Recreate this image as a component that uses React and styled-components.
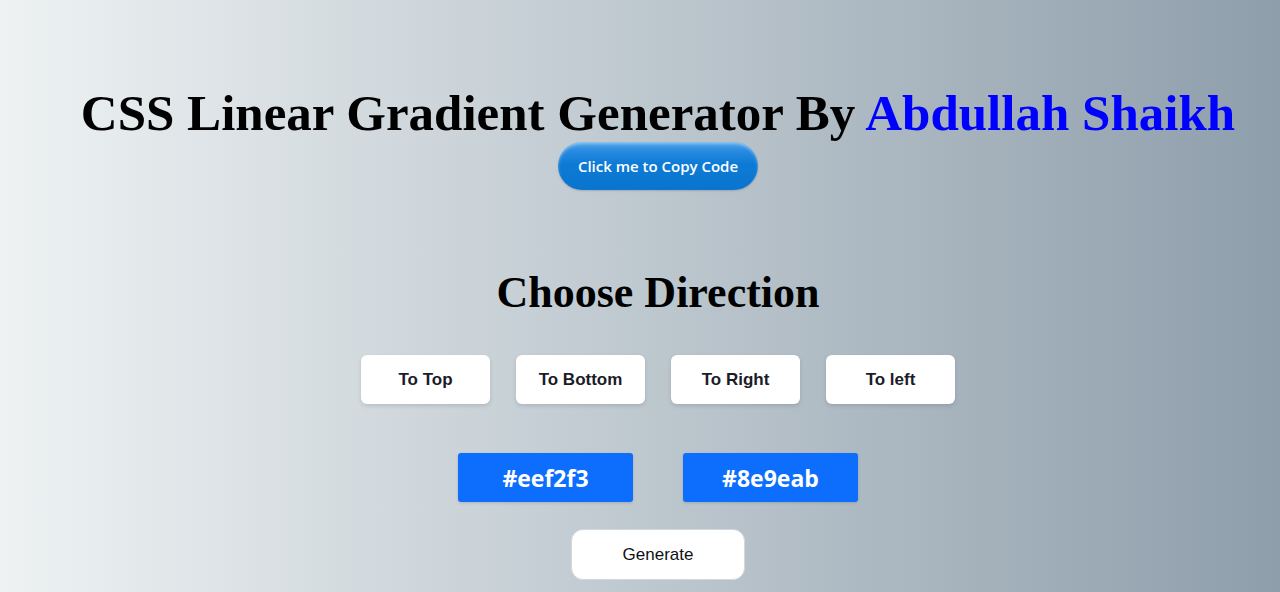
import React, { useState } from "react";
import styled, { createGlobalStyle } from "styled-components";

const directions = [
  { label: "To Top", value: "to top" },
  { label: "To Bottom", value: "to bottom" },
  { label: "To Right", value: "to right" },
  { label: "To left", value: "to left" },
];

function App() {
  const [direction, setDirection] = useState("to right");
  const [colorOne, setColorOne] = useState("#eef2f3");
  const [colorTwo, setColorTwo] = useState("#8e9eab");
  const [gradient, setGradient] = useState(
    `linear-gradient(to right, #eef2f3, #8e9eab)`
  );

  const handleGenerate = () => {
    setGradient(`linear-gradient(${direction}, ${colorOne}, ${colorTwo})`);
  };

  const handleCopy = () => {
    const code = `background: ${gradient};`;
    if (navigator.clipboard) navigator.clipboard.writeText(code).catch(() => {});
  };

  return (
    <>
      <GlobalStyle />
      <Page style={{ background: gradient }}>
        <Title>
          CSS Linear Gradient Generator By <Author>Abdullah Shaikh</Author>
        </Title>
        <CopyButton onClick={handleCopy}>Click me to Copy Code</CopyButton>

        <Subtitle>Choose Direction</Subtitle>
        <DirectionRow>
          {directions.map((d) => (
            <DirectionButton key={d.value} onClick={() => setDirection(d.value)}>
              {d.label}
            </DirectionButton>
          ))}
        </DirectionRow>

        <ColorRow>
          <ColorButton as="label">
            {colorOne}
            <HiddenInput
              type="color"
              value={colorOne}
              onChange={(e) => setColorOne(e.target.value)}
            />
          </ColorButton>
          <ColorButton as="label">
            {colorTwo}
            <HiddenInput
              type="color"
              value={colorTwo}
              onChange={(e) => setColorTwo(e.target.value)}
            />
          </ColorButton>
        </ColorRow>

        <GenerateButton onClick={handleGenerate}>Generate</GenerateButton>
      </Page>
    </>
  );
}

export default App;

/* styling */

const GlobalStyle = createGlobalStyle`
  * { box-sizing: border-box; }
  html, body { margin: 0; padding: 0; }
  body { font-family: "Liberation Serif", "Times New Roman", serif; }
`;

const Page = styled.div`
  min-height: 592px;
  display: flex;
  flex-direction: column;
  align-items: center;
  padding: 84px 0 12px 36px;
`;

const Title = styled.h1`
  margin: 0;
  font-family: "Liberation Serif", "Times New Roman", serif;
  font-size: 51px;
  line-height: 58px;
  font-weight: 700;
  color: #000;
  white-space: nowrap;
`;

const Author = styled.span`
  color: #0000ff;
`;

const CopyButton = styled.button`
  width: 200px;
  height: 48px;
  border: none;
  border-radius: 24px;
  cursor: pointer;
  color: #fff;
  font-family: "Open Sans", sans-serif;
  font-weight: 600;
  font-size: 15px;
  background: linear-gradient(to bottom, #55a6e6 0%, #2a8be0 18%, #0d7bd6 45%, #0a74cd 100%);
  box-shadow: inset 0 2px 3px rgba(255, 255, 255, 0.35), 0 1px 2px rgba(0, 0, 0, 0.15);
`;

const Subtitle = styled.h2`
  margin: 78px 0 38px;
  font-family: "Liberation Serif", "Times New Roman", serif;
  font-size: 44px;
  line-height: 49px;
  font-weight: 700;
  color: #000;
`;

const DirectionRow = styled.div`
  display: flex;
  gap: 26px;
`;

const DirectionButton = styled.button`
  width: 129px;
  height: 49px;
  border: none;
  border-radius: 6px;
  background: #fff;
  color: #1c1c28;
  font-family: "Liberation Sans", Arial, sans-serif;
  font-weight: 700;
  font-size: 17px;
  cursor: pointer;
  box-shadow: 0 2px 4px rgba(0, 0, 0, 0.12);
`;

const ColorRow = styled.div`
  display: flex;
  gap: 50px;
  margin-top: 49px;
`;

const ColorButton = styled.button`
  position: relative;
  width: 175px;
  height: 49px;
  display: flex;
  align-items: center;
  justify-content: center;
  border-radius: 3px;
  background: #0d6efd;
  color: #fff;
  font-family: "Open Sans", sans-serif;
  font-weight: 700;
  font-size: 23px;
  cursor: pointer;
  box-shadow: 0 1px 3px rgba(0, 0, 0, 0.15);
`;

const HiddenInput = styled.input`
  position: absolute;
  inset: 0;
  width: 100%;
  height: 100%;
  opacity: 0;
  cursor: pointer;
`;

const GenerateButton = styled.button`
  margin-top: 27px;
  width: 174px;
  height: 51px;
  border: 1px solid #d4d8dc;
  border-radius: 12px;
  background: #fff;
  color: #111;
  font-family: "Liberation Sans", Arial, sans-serif;
  font-size: 17px;
  cursor: pointer;
`;
